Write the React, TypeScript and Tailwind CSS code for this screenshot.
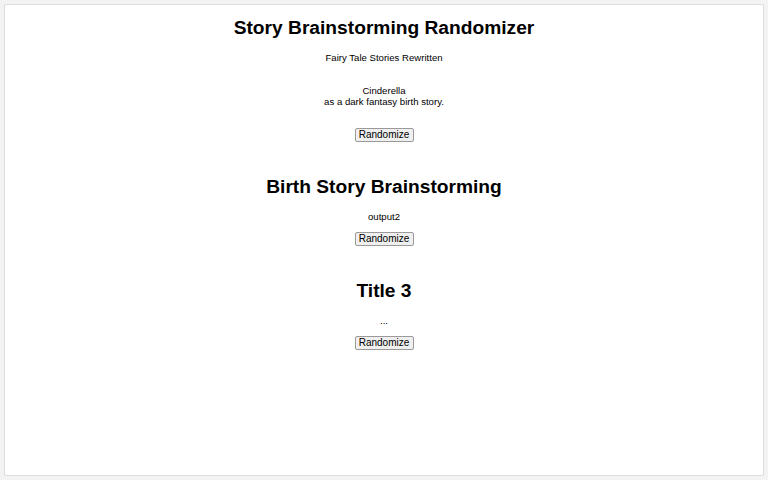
const sections = [
  { title: 'Birth Story Brainstorming', output: ['output2'] },
  { title: 'Title 3', output: ['...'] },
];

function RandomizeButton() {
  return (
    <button className="mx-auto block h-[14px] w-[59px] rounded-[2px] border border-[#9a9a9a] bg-[#efefef] text-[10px] leading-[12px] text-black">
      Randomize
    </button>
  );
}

export default function App() {
  return (
    <div className="h-[480px] w-[768px] bg-[#f3f3f3] p-[4px] font-['Liberation_Sans',Arial,sans-serif] text-black">
      <div className="h-[472px] rounded-[2px] border border-[#dddddd] bg-white text-center">
        <h1 className="mt-[12px] text-[19.2px] font-bold leading-[22px]">Story Brainstorming Randomizer</h1>
        <p className="mt-[12.5px] text-[9.6px] leading-[11px]">Fairy Tale Stories Rewritten</p>
        <div className="mt-[22px] text-[9.6px] leading-[11px]">
          <p>Cinderella</p>
          <p>as a dark fantasy birth story.</p>
        </div>
        <div className="mt-[21.5px]">
          <RandomizeButton />
        </div>

        {sections.map((s) => (
          <section key={s.title}>
            <h2 className="mt-[34px] text-[19.2px] font-bold leading-[22px]">{s.title}</h2>
            <div className="mt-[13px] text-[9.6px] leading-[11px]">
              {s.output.map((line) => (
                <p key={line}>{line}</p>
              ))}
            </div>
            <div className="mt-[10px]">
              <RandomizeButton />
            </div>
          </section>
        ))}
      </div>
    </div>
  );
}
